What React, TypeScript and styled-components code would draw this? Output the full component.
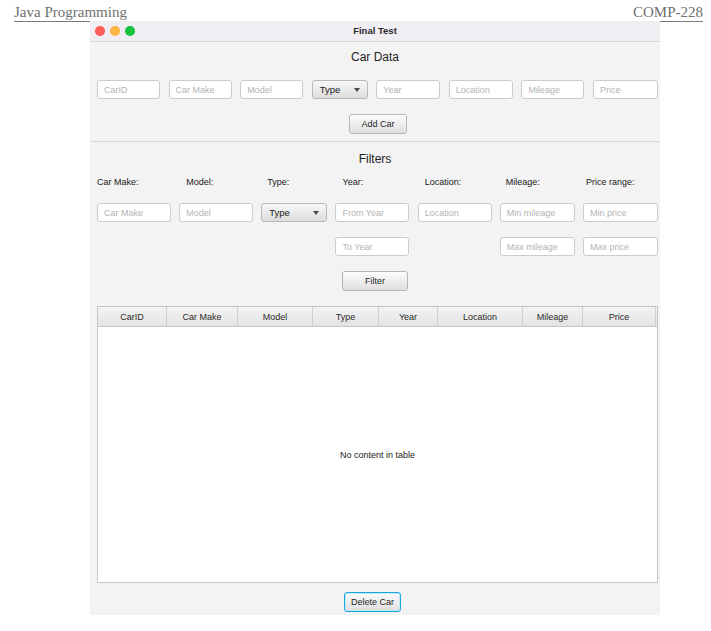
import React from 'react';
import styled, { createGlobalStyle } from 'styled-components';

const GlobalStyle = createGlobalStyle`
  html, body { margin: 0; padding: 0; background: #ffffff; }
  body { font-family: "Liberation Sans", Arial, sans-serif; }
  * { box-sizing: border-box; }
`;

const Page = styled.div`
  width: 711px;
  height: 631px;
  overflow: hidden;
`;

const DocHeader = styled.header`
  margin: 0 8px 0 14px;
  height: 22px;
  border-bottom: 1px solid #7a7a7a;
  display: flex;
  justify-content: space-between;
  align-items: flex-end;
  font-family: "Liberation Serif", "Times New Roman", serif;
  font-size: 15px;
  line-height: 17px;
  color: #707070;
`;

const Window = styled.div`
  margin: -1px 0 0 90px;
  width: 570px;
  height: 594px;
  background: #f3f3f3;
  display: flex;
  flex-direction: column;
`;

const TitleBar = styled.div`
  height: 21px;
  flex: none;
  border-bottom: 1px solid #d8d6da;
  background: #f0edf3;
  display: grid;
  grid-template-columns: 1fr auto 1fr;
  align-items: center;
`;

const Lights = styled.div`
  display: flex;
  gap: 5.5px;
  padding-left: 5px;
`;

const Light = styled.span<{ $c: string }>`
  width: 9.5px;
  height: 9.5px;
  border-radius: 50%;
  background: ${(p) => p.$c};
`;

const WindowTitle = styled.div`
  font-size: 9.5px;
  font-weight: bold;
  color: #2b2b2b;
  margin-top: -1px;
`;

const Content = styled.div`
  display: flex;
  flex-direction: column;
  align-items: center;
`;

const SectionTitle = styled.div<{ $mt: number }>`
  margin-top: ${(p) => p.$mt}px;
  font-size: 12px;
  line-height: 14px;
  color: #1f1f1f;
`;

const Row = styled.div<{ $mt: number }>`
  align-self: flex-start;
  margin: ${(p) => p.$mt}px 0 0 7px;
  width: 561px;
  display: flex;
  justify-content: space-between;
`;

const FilterGrid = styled.div<{ $mt: number }>`
  align-self: flex-start;
  margin: ${(p) => p.$mt}px 0 0 7px;
  width: 561px;
  display: grid;
  grid-template-columns: 74px 74px 66px 74px 74px 75px 75px;
  justify-content: space-between;
`;

const FieldLabel = styled.div<{ $indent: number }>`
  padding-left: ${(p) => p.$indent}px;
  font-size: 9px;
  line-height: 12px;
  color: #202020;
  white-space: nowrap;
`;

const Field = styled.input<{ $w?: number }>`
  width: ${(p) => (p.$w ? `${p.$w}px` : '100%')};
  height: 19px;
  border: 1px solid #cbcbcb;
  border-radius: 3px;
  background: #ffffff;
  padding: 0 0 0 6px;
  font-family: "Liberation Sans", Arial, sans-serif;
  font-size: 9px;
  color: #333333;
  outline: none;
  &::placeholder {
    color: #b4b4b4;
  }
`;

const Combo = styled.div<{ $w?: number }>`
  width: ${(p) => (p.$w ? `${p.$w}px` : '100%')};
  height: 19px;
  border: 1px solid #b8b8b8;
  border-radius: 3px;
  background: linear-gradient(#f7f7f7, #dddddd);
  display: flex;
  align-items: center;
  justify-content: space-between;
  padding: 0 7px 0 7px;
  font-size: 9.5px;
  color: #202020;
`;

const Arrow = styled.span`
  width: 0;
  height: 0;
  border-left: 3.5px solid transparent;
  border-right: 3.5px solid transparent;
  border-top: 4px solid #4a4a4a;
`;

const Button = styled.button<{ $mt: number; $w: number; $shift?: number; $focused?: boolean }>`
  margin-top: ${(p) => p.$mt}px;
  margin-left: ${(p) => Math.max(0, (p.$shift ?? 0) * 2)}px;
  margin-right: ${(p) => Math.max(0, -(p.$shift ?? 0) * 2)}px;
  width: ${(p) => p.$w}px;
  height: 20px;
  border: 1px solid ${(p) => (p.$focused ? '#1aa6de' : '#b6b6b6')};
  box-shadow: ${(p) => (p.$focused ? 'inset 0 0 0 1px #c4e8f6' : 'none')};
  border-radius: 3px;
  background: linear-gradient(#fcfcfc, #dfdfdf);
  font-family: "Liberation Sans", Arial, sans-serif;
  font-size: 9px;
  color: #1f1f1f;
  padding: 0;
`;

const Separator = styled.div`
  margin-top: 7px;
  align-self: stretch;
  height: 1px;
  background: #d6d6d6;
`;

const Table = styled.div`
  align-self: flex-start;
  margin: 15px 0 0 7px;
  width: 561px;
  height: 277px;
  border: 1px solid #c6c6c6;
  background: #ffffff;
  display: flex;
  flex-direction: column;
`;

const HeaderRow = styled.div`
  height: 20px;
  flex: none;
  display: flex;
  border-bottom: 1px solid #c6c6c6;
  background: linear-gradient(#f3f3f3, #e3e3e3);
`;

const HeaderCell = styled.div<{ $w: number }>`
  width: ${(p) => p.$w}px;
  flex: none;
  border-right: 1px solid #cdcdcd;
  display: flex;
  align-items: center;
  justify-content: center;
  font-size: 9px;
  color: #2a2a2a;
`;

const Filler = styled.div`
  flex: 1;
`;

const TableBody = styled.div`
  flex: 1;
  display: flex;
  align-items: center;
  justify-content: center;
  font-size: 9px;
  color: #1a1a1a;
`;

const carFields: [string, number][] = [
  ['CarID', 63],
  ['Car Make', 63],
  ['Model', 63],
  ['TYPE', 56],
  ['Year', 64],
  ['Location', 64],
  ['Mileage', 63],
  ['Price', 65],
];

const labels: [string, number][] = [
  ['Car Make:', 0],
  ['Model:', 7],
  ['Type:', 6],
  ['Year:', 7],
  ['Location:', 7],
  ['Mileage:', 6],
  ['Price range:', 3],
];

const columns: [string, number][] = [
  ['CarID', 69],
  ['Car Make', 71],
  ['Model', 75],
  ['Type', 66],
  ['Year', 59],
  ['Location', 85],
  ['Mileage', 60],
  ['Price', 73],
];

export default function App() {
  return (
    <Page>
      <GlobalStyle />
      <DocHeader>
        <span>Java Programming</span>
        <span>COMP-228</span>
      </DocHeader>
      <Window>
        <TitleBar>
          <Lights>
            <Light $c="#ff5c5a" />
            <Light $c="#ffb544" />
            <Light $c="#19c13f" />
          </Lights>
          <WindowTitle>Final Test</WindowTitle>
          <span />
        </TitleBar>
        <Content>
          <SectionTitle $mt={8}>Car Data</SectionTitle>
          <Row $mt={16}>
            {carFields.map(([name, w]) =>
              name === 'TYPE' ? (
                <Combo key={name} $w={w}>
                  Type
                  <Arrow />
                </Combo>
              ) : (
                <Field key={name} $w={w} placeholder={name} readOnly />
              )
            )}
          </Row>
          <Button $mt={15} $w={58} $shift={3}>
            Add Car
          </Button>
          <Separator />
          <SectionTitle $mt={10}>Filters</SectionTitle>
          <FilterGrid $mt={10}>
            {labels.map(([l, i]) => (
              <FieldLabel key={l} $indent={i}>
                {l}
              </FieldLabel>
            ))}
          </FilterGrid>
          <FilterGrid $mt={15}>
            <Field placeholder="Car Make" readOnly />
            <Field placeholder="Model" readOnly />
            <Combo>
              Type
              <Arrow />
            </Combo>
            <Field placeholder="From Year" readOnly />
            <Field placeholder="Location" readOnly />
            <Field placeholder="Min mileage" readOnly />
            <Field placeholder="Min price" readOnly />
          </FilterGrid>
          <FilterGrid $mt={15}>
            <span />
            <span />
            <span />
            <Field placeholder="To Year" readOnly />
            <span />
            <Field placeholder="Max mileage" readOnly />
            <Field placeholder="Max price" readOnly />
          </FilterGrid>
          <Button $mt={15} $w={66}>
            Filter
          </Button>
          <Table>
            <HeaderRow>
              {columns.map(([c, w]) => (
                <HeaderCell key={c} $w={w}>
                  {c}
                </HeaderCell>
              ))}
              <Filler />
            </HeaderRow>
            <TableBody>No content in table</TableBody>
          </Table>
          <Button $mt={9} $w={57} $shift={-2.5} $focused>
            Delete Car
          </Button>
        </Content>
      </Window>
    </Page>
  );
}
